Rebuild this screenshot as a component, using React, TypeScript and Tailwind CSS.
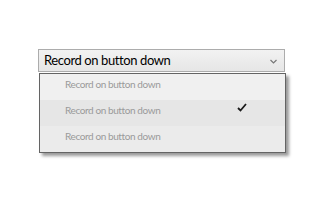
const ITEMS = ['Record on button down', 'Record on button down', 'Record on button down'];

export default function App() {
  return (
    <div className="w-[331px] h-[201px] bg-white pt-[49px] pl-[38px]" style={{ fontFamily: 'Lato, "Open Sans", sans-serif' }}>
      <div className="w-[247px]">
        {/* combo box */}
        <div className="h-[23px] flex items-center justify-between border border-[#acacac] bg-gradient-to-b from-[#f2f2f2] to-[#e6e6e6] pl-[5px] pr-[7px]">
          <span className="text-[13px] text-black leading-none tracking-[-0.4px]">Record on button down</span>
          <svg width="7" height="5" viewBox="0 0 7 5" className="mt-[1px]">
            <path d="M0.5 1 L3.5 4 L6.5 1" fill="none" stroke="#777" strokeWidth="1.2" />
          </svg>
        </div>
        {/* dropdown */}
        <div className="ml-[1px] mt-[1px] w-[247px] border border-[#646464] shadow-[3px_3px_3px_rgba(0,0,0,0.4)]">
          {ITEMS.map((item, i) => (
            <div
              key={i}
              className={`h-[26px] flex items-start justify-between pt-[5px] pl-[25px] pr-[38px] ${i === 1 ? 'bg-[#e6e6e6]' : i === 0 ? 'bg-[#f0f0f0]' : 'bg-[#ebebeb]'}`}
            >
              <span className="text-[10px] text-[#9a9a9a] leading-none tracking-[-0.4px]">{item}</span>
              {i === 1 && (
                <svg width="10" height="9" viewBox="0 0 10 9" className="mt-[-2px]">
                  <path d="M1 5 L3.5 7.5 L9 1" fill="none" stroke="#1a1a1a" strokeWidth="1.8" />
                </svg>
              )}
            </div>
          ))}
        </div>
      </div>
    </div>
  );
}
